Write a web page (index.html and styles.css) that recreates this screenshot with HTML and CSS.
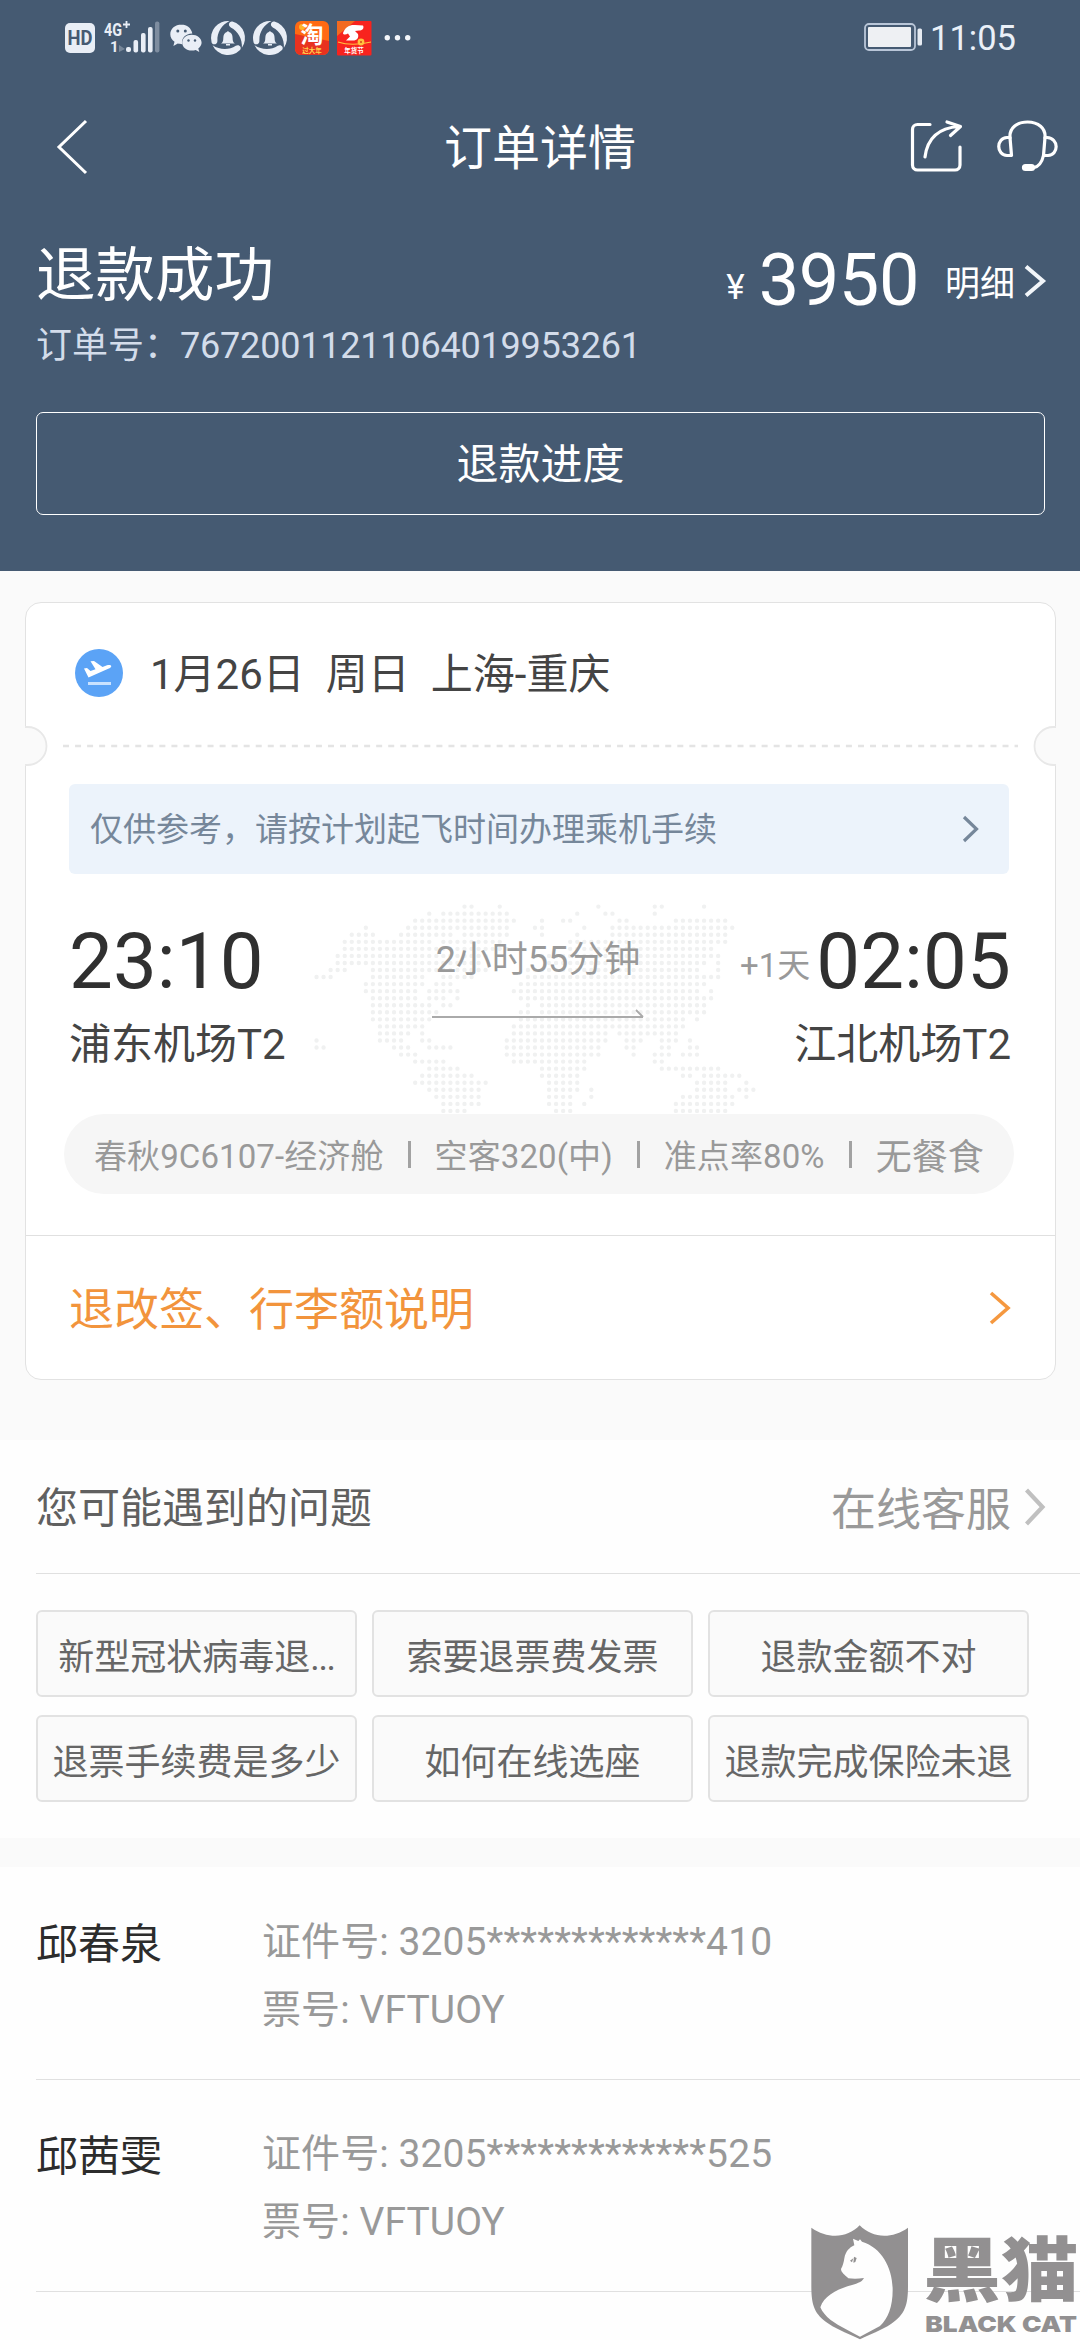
FILE: index.html
```html
<!DOCTYPE html>
<html lang="zh-CN">
<head>
<meta charset="utf-8">
<title>订单详情</title>
<link rel="stylesheet" href="styles.css">
</head>
<body>
<header class="header">
  <div class="status-bar">
    <svg class="status-icons" width="372" height="76" viewBox="40 0 372 76">
      <g fill="#e9eef6">
        <rect x="65" y="23" width="30" height="30" rx="5"/>
        <text class="hd-text" x="80" y="45" textLength="25" lengthAdjust="spacingAndGlyphs">HD</text>
        <text class="net-text" x="104" y="36" textLength="18" lengthAdjust="spacingAndGlyphs">4G</text>
        <path d="M126.500 21v7M123 24.500h7" stroke="#e9eef6" stroke-width="1.800"/>
        <text class="sim-text" x="110" y="52">1</text>
        <path d="M119 45l6 4-6 3z" opacity=".3"/>
        <rect x="126" y="47" width="5" height="5" rx="2"/>
        <rect x="133.500" y="40" width="4.600" height="12.500" rx="2"/>
        <rect x="141" y="33" width="4.600" height="19.500" rx="2"/>
        <rect x="148" y="27" width="4.600" height="25.500" rx="2"/>
        <rect x="155" y="21.500" width="4.400" height="31" rx="2" opacity=".35"/>
        <path d="M181.500 24.500c-6.400 0-11.200 4.300-11.200 9.700 0 3.100 1.600 5.600 4.200 7.500l-1.100 4.400 4.400-2.500c1.700.5 2.400.6 4.400.6-1.300-5.500 3-10.600 10.100-10.700-1-5.200-5.300-9-10.800-9z"/>
        <path d="M191.700 34.800c-5.300 0-9.500 3.400-9.500 7.900 0 4.400 4.200 7.900 9.500 7.900 1.400 0 2.800-.2 4-.7l3.600 2.100-1-3.600c2-1.500 3.300-3.500 3.300-5.700 0-4.500-4.600-7.900-9.900-7.900z"/>
        <g fill="#455a72"><circle cx="177.800" cy="31" r="1.500"/><circle cx="185.300" cy="31" r="1.500"/><circle cx="188.500" cy="40.500" r="1.200"/><circle cx="195" cy="40.500" r="1.200"/></g>
        <g id="bell">
          <path d="M221 43.500c1.700-1 2.300-2.600 2.300-5.500 0-3.200 1.400-5.200 3.500-6 .2-1.100 2-1.100 2.300 0 2.200.8 3.500 2.800 3.500 6 0 2.900.7 4.500 2.300 5.500z"/>
          <path d="M226 44h4v1.500h-4z"/>
          <path id="swirl" d="M232.400 21.600A17 17 0 0 1 241.900 47.800C242.500 39 238 31 230.800 27.400 227.500 25.500 229 21 232.400 21.600z"/>
          <use href="#swirl" transform="rotate(120 228 38)"/>
          <use href="#swirl" transform="rotate(240 228 38)"/>
        </g>
        <use href="#bell" x="42"/>
      </g>
      <rect x="295" y="21" width="34" height="34" rx="6" fill="#ff6a13"/>
      <path d="M295 34v15a6 6 0 0 0 6 6h22a6 6 0 0 0 6-6v-8z" fill="#e8321f"/>
      <circle cx="302" cy="27" r="3" fill="#ffb52b"/>
      <text class="tao-text" x="312" y="43">淘</text>
      <text class="tao-sub" x="312" y="53">过大年</text>
      <rect x="337" y="21" width="34.500" height="34.500" rx="1" fill="#f8231e"/>
      <path d="M337 21h18l-18 15z" fill="#f36a20"/>
      <path d="M343 33c2-6 7-8.500 12-8l8 .5c1.500 3-1 5-4 5l-4 .5 3 3c1 4-1 6.500-5 6.500h-7l4-4-2-3c-2 1.500-5 1.500-5-.5z" fill="#fff"/>
      <path d="M338 42c9 3 20 3 33 0" fill="none" stroke="#ffc23e" stroke-width="1.200"/>
      <circle cx="361" cy="42" r="3.400" fill="#ffc23e"/><circle cx="361" cy="42" r="1" fill="#d5441b"/>
      <text class="jd-sub" x="354" y="52.500">年货节</text>
      <g fill="#f3f6fa"><circle cx="387.300" cy="37.700" r="2.700"/><circle cx="397.500" cy="37.700" r="2.700"/><circle cx="407.700" cy="37.700" r="2.700"/></g>
    </svg>
    <div class="status-right">
      <svg width="60" height="30" viewBox="0 0 60 30">
        <rect x="1" y="1" width="50" height="26" rx="4" fill="none" stroke="#b9c6d8" stroke-width="1.800"/>
        <rect x="4" y="4" width="43" height="20" rx="1" fill="#eef0f3"/>
        <rect x="53.500" y="5.500" width="4.500" height="17" rx="1.500" fill="#e6ebf2"/>
      </svg>
      <span class="clock">11:05</span>
    </div>
  </div>
  <nav class="nav">
    <svg class="back" width="40" height="60" viewBox="0 0 40 60"><path d="M34 4L7 30l27 26" fill="none" stroke="#fff" stroke-width="3"/></svg>
    <h1 class="nav-title">订单详情</h1>
    <div class="nav-actions">
      <svg width="56" height="56" viewBox="0 0 56 56" fill="none" stroke="#fff" stroke-width="3.200" stroke-linecap="round" stroke-linejoin="round">
        <path d="M22 5.500H9.500a5 5 0 0 0-5 5V46a5 5 0 0 0 5 5H47a5 5 0 0 0 5-5V28"/>
        <path d="M17 38C19 22 28 9 51 7.500M39 3l13.500 4.500-10 9"/>
      </svg>
      <svg width="64" height="56" viewBox="0 0 64 56" fill="none" stroke="#fff" stroke-width="3.200" stroke-linecap="round" stroke-linejoin="round">
        <path d="M15 19C14 9 22 3 32.500 3S51 9 50 19"/>
        <path d="M15 18.500L16.500 36.500H12C1 36 1 19 12 18.500zM50 18.500h2c12 .5 12 17.500 1 18h-4.500z"/>
        <path d="M48.500 36.500C47 43 44 48 38 49"/>
        <rect x="28.500" y="46.500" width="10" height="4" rx="2" fill="#fff"/>
      </svg>
    </div>
  </nav>
  <section class="summary">
    <div class="summary-left">
      <h2 class="state">退款成功</h2>
      <p class="order-no">订单号：<span class="digits">76720011211064019953261</span></p>
    </div>
    <div class="price">
      <span class="yen">¥</span><span class="amount">3950</span><span class="detail">明细</span>
      <svg width="24" height="34" viewBox="0 0 24 34"><path d="M3 2.500L20 17 3 31.500" fill="none" stroke="#f2f6fa" stroke-width="4"/></svg>
    </div>
  </section>
  <button class="progress">退款进度</button>
</header>

<main>
  <article class="card">
    <div class="card-head">
      <svg class="plane" width="48" height="48" viewBox="0 0 48 48">
        <circle cx="24" cy="24" r="24" fill="#5ba3f6"/>
        <path d="M9 19.500l3-.5 3.500 3 5-1.700-5-8 3.500-.3 8.500 6 4.500-1.700c2-.7 4-.3 4.200.6.300 1-1 2.100-3 2.900L13.500 28.500z" fill="#fff"/>
        <path d="M13 34.500h23" stroke="#c9e2ff" stroke-width="3"/>
      </svg>
      <span>1月26日</span><span>周日</span><span>上海-重庆</span>
    </div>
    <div class="tear">
      <svg width="23" height="40" viewBox="0 0 23 40"><path d="M0 1h2.500a19 19 0 0 1 0 38H0z" fill="#fafafa"/><path d="M0 1h2.500a19 19 0 0 1 0 38H0" fill="none" stroke="#e8e8e8" stroke-width="1.800"/></svg>
      <svg class="dashes" width="955" height="4" viewBox="0 0 955 4"><path d="M0 2h955" stroke="#e4e4e4" stroke-width="2.600" stroke-dasharray="6 6.045"/></svg>
      <svg width="23" height="40" viewBox="0 0 23 40"><path d="M23 1h-2.500a19 19 0 0 0 0 38H23z" fill="#fafafa"/><path d="M23 1h-2.500a19 19 0 0 0 0 38H23" fill="none" stroke="#e8e8e8" stroke-width="1.800"/></svg>
    </div>
    <div class="notice">
      <span>仅供参考，请按计划起飞时间办理乘机手续</span>
      <svg width="17" height="28" viewBox="0 0 17 28"><path d="M2 2l12.500 12L2 26" fill="none" stroke="#76879a" stroke-width="3.200"/></svg>
    </div>
    <div class="flight">
      <svg class="world" width="458" height="214" viewBox="-.5 -.5 65 30.350">
        <path fill="none" stroke="#f0f1f1" stroke-width=".62" stroke-linecap="round" stroke-dasharray=".001 .999" d="M21 0h1.100M26 0h.1M40 0h.1M48 0h1.100M55 0h.1M16 1h.1M18 1h9.100M37 1h.1M41 1h1.100M48 1h.1M14 2h14.100M32 2h.1M35 2h1.100M43 2h1.100M51 2h7.100M7 3h.1M13 3h14.100M31 3h1.100M38 3h.1M42 3h17.100M5 4h3.100M12 4h7.100M21 4h6.100M32 4h.1M37 4h.1M42 4h16.100M4 5h12.100M18 5h8.100M36 5h22.100M4 6h23.100M36 6h20.100M3 7h21.100M32 7h25.100M3 8h20.100M33 8h22.100M57 8h.1M2 9h2.100M8 9h16.100M30 9h24.100M57 9h.1M0 10h2.100M8 10h7.100M18 10h4.100M30 10h27.100M7 11h8.100M17 11h2.100M29 11h26.100M7 12h7.100M16 12h4.100M28 12h26.100M56 12h.1M8 13h6.100M16 13h2.100M20 13h.1M29 13h27.100M8 14h8.100M18 14h1.100M30 14h.1M32 14h23.100M8 15h9.100M29 15h1.100M32 15h23.100M8 16h8.100M29 16h23.100M54 16h.1M9 17h6.100M28 17h24.100M9 18h4.100M15 18h.1M28 18h13.100M43 18h8.100M0 19h.1M9 19h3.100M15 19h1.100M27 19h14.100M44 19h2.100M49 19h2.100M53 19h.1M0 20h1.100M11 20h2.100M16 20h3.100M27 20h13.100M44 20h1.100M49 20h1.100M53 20h1.100M12 21h2.100M27 21h13.100M45 21h.1M48 21h2.100M52 21h2.100M14 22h4.100M28 22h10.100M48 22h1.100M16 23h4.100M32 23h6.100M49 23h8.100M15 24h7.100M32 24h5.100M52 24h1.100M55 24h5.100M14 25h10.100M33 25h4.100M54 25h4.100M61 25h.1M16 26h7.100M33 26h4.100M39 26h.1M54 26h4.100M60 26h2.100M17 27h6.100M33 27h3.100M39 27h.1M52 27h7.100M61 27h.1M18 28h5.100M33 28h3.100M38 28h.1M51 28h8.100M18 29h3.100M34 29h2.100M51 29h7.100"/>
      </svg>
      <div class="stop">
        <div class="time">23:10</div>
        <div class="airport">浦东机场T2</div>
      </div>
      <div class="duration">
        <span>2小时55分钟</span>
        <svg width="212" height="10" viewBox="0 0 212 10"><path d="M0 8h211M204 1l7 7" fill="none" stroke="#aaa" stroke-width="1.800"/></svg>
      </div>
      <div class="stop stop-end">
        <div class="time"><small>+1天</small>02:05</div>
        <div class="airport">江北机场T2</div>
      </div>
    </div>
    <div class="meta">
      <span>春秋9C6107-经济舱</span><i></i><span>空客320(中)</span><i></i><span>准点率80%</span><i></i><span class="meal">无餐食</span>
    </div>
    <div class="rules">
      <span>退改签、行李额说明</span>
      <svg width="22" height="34" viewBox="0 0 22 34"><path d="M2 2l17 15L2 32" fill="none" stroke="#f5983f" stroke-width="3.600"/></svg>
    </div>
  </article>

  <section class="faq">
    <div class="faq-head">
      <h3>您可能遇到的问题</h3>
      <div class="service"><span>在线客服</span><svg width="22" height="38" viewBox="0 0 22 38"><path d="M2.500 2l16 17-16 17" fill="none" stroke="#c0c0c0" stroke-width="4.200"/></svg></div>
    </div>
    <div class="faq-grid">
      <button>新型冠状病毒退<span class="ellipsis">...</span></button>
      <button>索要退票费发票</button>
      <button>退款金额不对</button>
      <button>退票手续费是多少</button>
      <button>如何在线选座</button>
      <button>退款完成保险未退</button>
    </div>
  </section>

  <section class="passengers">
    <div class="passenger">
      <div class="name">邱春泉</div>
      <div class="docs"><p>证件号: 3205*************410</p><p>票号: VFTUOY</p></div>
    </div>
    <div class="passenger">
      <div class="name">邱茜雯</div>
      <div class="docs"><p>证件号: 3205*************525</p><p>票号: VFTUOY</p></div>
    </div>
  </section>
</main>

<svg class="watermark" width="300" height="140" viewBox="0 0 900 420" fill="#929091">
  <path d="M94 83c50 35 108 32 145-7 38 39 96 42 145 7v175c0 60-10 85-50 113-30 20-65 32-94 47-29-15-64-27-94-47-42-28-52-53-52-113z"/>
  <path d="M219 116l16 7 5-5 6 7c60 18 92 80 92 145 0 50-14 86-38 108l-60 32c-30-16-60-30-88-50-15-12-25-24-31-38 10-32 45-52 84-64 24-7 40-10 47-24-20 3-36 2-47 1-10-10-22-18-22-28 6-10 8-20 10-32 4-20 14-32 30-39z" fill="#fefefe"/>
  <path d="M210 182l10-7-4 12zM222 170l8 4-4 12-6 2z"/>
  <text class="wm-cn" x="430" y="287" textLength="466" lengthAdjust="spacingAndGlyphs">黑猫</text>
  <text class="wm-en" x="436" y="397" textLength="455" lengthAdjust="spacingAndGlyphs">BLACK CAT</text>
</svg>
</body>
</html>
```
FILE: styles.css
```css
* { box-sizing: border-box; }

body {
  position: relative;
  margin: 0;
  width: 1080px;
  height: 2340px;
  overflow: hidden;
  background: #fafafa;
  color: #444;
  font-family: Roboto, "Noto Sans CJK SC", sans-serif;
}

h1, h2, h3, p { margin: 0; font-weight: 400; }

button {
  display: block;
  margin: 0;
  padding: 0;
  font-family: inherit;
  white-space: nowrap;
}

svg { display: block; flex: none; }

/* Header */
.header {
  height: 571px;
  background: #455a72;
  color: #fff;
}

.status-bar {
  display: flex;
  justify-content: space-between;
  height: 76px;
  padding: 0 64px 0 40px;
}

.status-right {
  display: flex;
  align-items: center;
  gap: 6px;
}

.clock {
  font-size: 34.500px;
  line-height: 76px;
  color: #eaf0f8;
}

.hd-text { font: 700 21px Roboto, sans-serif; fill: #455a72; text-anchor: middle; }
.net-text { font: 700 19px Roboto, sans-serif; }
.sim-text { font: 700 15px Roboto, sans-serif; }
.tao-text { font: 700 23px "Noto Sans CJK SC", sans-serif; fill: #fff; text-anchor: middle; }
.tao-sub { font: 700 6.500px "Noto Sans CJK SC", sans-serif; fill: #ffd34d; text-anchor: middle; }
.jd-sub { font: 700 6.500px "Noto Sans CJK SC", sans-serif; fill: #fff; text-anchor: middle; }

.nav {
  display: grid;
  grid-template-columns: 1fr auto 1fr;
  align-items: center;
  height: 142px;
  padding: 0 21px;
}

.back { margin-left: 31px; }

.nav-title {
  padding-top: 4px;
  font-size: 48px;
  line-height: 70px;
}

.nav-actions {
  display: flex;
  justify-content: flex-end;
  gap: 31px;
}

.summary {
  display: flex;
  justify-content: space-between;
  height: 194px;
  padding: 16px 33px 0 36px;
}

.state {
  font-size: 59.500px;
  line-height: 84px;
}

.order-no {
  font-size: 36px;
  line-height: 56px;
  color: #d3dcea;
}

.order-no .digits { letter-spacing: -.2px; }

.price {
  display: flex;
  align-items: baseline;
  height: 94px;
  line-height: 94px;
}

.yen { position: relative; top: -6px; font-size: 35px; margin-right: 14px; }
.amount { font-size: 72px; margin-right: 26px; letter-spacing: -.4px; }
.detail { position: relative; top: -9px; font-size: 35px; margin-right: 8px; }
.price svg { align-self: center; }

.progress {
  width: 1009px;
  height: 103px;
  margin-left: 36px;
  padding-top: 2px;
  border: 1px solid #fff;
  border-radius: 7px;
  background: none;
  color: #fff;
  font-size: 42px;
  line-height: 100px;
}

/* Flight card */
.card {
  width: 1031px;
  height: 778px;
  margin: 31px 0 0 25px;
  border: 1px solid #e2e2e2;
  border-radius: 16px;
  background: #fff;
}

.card-head {
  display: flex;
  align-items: center;
  height: 123px;
  padding: 17px 0 0 49px;
  font-size: 42px;
  line-height: 60px;
}

.card-head .plane { margin-right: 27px; }
.card-head span { margin-right: 21px; padding-top: 3px; }

.tear {
  display: flex;
  align-items: center;
  justify-content: space-between;
  height: 40px;
  margin: 0 -1px;
}

.notice {
  display: flex;
  align-items: center;
  justify-content: space-between;
  width: 940px;
  height: 90px;
  margin: 18px 0 0 43px;
  padding: 0 30px 0 21px;
  border-radius: 6px;
  background: #ecf3fb;
  color: #76879a;
  font-size: 33px;
}

.notice span { padding-bottom: 4px; }

.flight {
  position: relative;
  display: flex;
  justify-content: space-between;
  height: 240px;
  padding: 42px 44px 0 43px;
}

.world {
  position: absolute;
  left: 287px;
  top: 29px;
}

.time {
  position: relative;
  height: 92px;
  color: #303030;
  font-size: 78px;
  line-height: 92px;
  letter-spacing: .1px;
}

.time small {
  position: relative;
  top: -11px;
  margin-right: 6px;
  color: #999;
  font-size: 33px;
  letter-spacing: 0;
}

.airport {
  position: relative;
  font-size: 42px;
  line-height: 74px;
}

.stop-end { text-align: right; }

.duration {
  position: absolute;
  left: 406px;
  top: 60px;
  display: flex;
  flex-direction: column;
  align-items: center;
  color: #999;
  font-size: 36px;
  line-height: 52px;
}

.duration svg { margin-top: 23px; }

.meta {
  display: flex;
  align-items: center;
  justify-content: space-between;
  width: 950px;
  height: 80px;
  margin-left: 38px;
  padding: 0 30px;
  border-radius: 40px;
  background: #f6f6f6;
  color: #999;
  font-size: 33px;
  letter-spacing: .1px;
  white-space: nowrap;
}

.meta i { width: 3px; height: 27px; background: #a2a2a2; }
.meta .meal { font-size: 36px; }

.rules {
  display: flex;
  align-items: center;
  justify-content: space-between;
  height: 142px;
  margin-top: 41px;
  padding: 2px 44px 0 43px;
  border-top: 1px solid #e0e0e0;
  color: #f2943c;
  font-size: 45px;
}

.rules span { padding-bottom: 2px; }

/* Questions */
.faq {
  height: 398px;
  margin-top: 60px;
  background: #fefefe;
}

.faq-head {
  display: flex;
  align-items: center;
  justify-content: space-between;
  height: 134px;
  margin-left: 36px;
  padding-right: 34px;
  border-bottom: 1px solid #e0e0e0;
}

.faq-head h3 { padding-bottom: 5px; font-size: 42px; color: #606060; }

.service {
  display: flex;
  align-items: center;
  gap: 13px;
  color: #999;
  font-size: 45px;
}

.faq-grid {
  display: grid;
  grid-template-columns: repeat(3, 321px);
  gap: 18px 15px;
  padding: 36px 0 0 36px;
}

.faq-grid button {
  height: 87px;
  border: 2px solid #e2e2e2;
  border-radius: 6px;
  background: #fafafa;
  color: #666;
  font-size: 36px;
}

.ellipsis { letter-spacing: -1.300px; }

/* Passengers */
.passengers {
  height: 473px;
  margin-top: 29px;
  background: #fefefe;
}

.passenger {
  display: flex;
  height: 212px;
  margin-left: 36px;
  padding-top: 41px;
  border-bottom: 1px solid #e0e0e0;
}

.passenger:first-child { height: 213px; }
.passenger + .passenger { padding-top: 40px; }

.name {
  width: 226px;
  padding-top: 3px;
  color: #2c2c2c;
  font-size: 42px;
  line-height: 68px;
}

.docs {
  color: #999;
  font-size: 39px;
  line-height: 68px;
  letter-spacing: .09px;
}

.watermark {
  position: absolute;
  left: 780px;
  top: 2200px;
}

.wm-cn { font: 900 212px "Noto Sans CJK SC", sans-serif; }
.wm-en { font: 900 66px Inter, sans-serif; }
```
